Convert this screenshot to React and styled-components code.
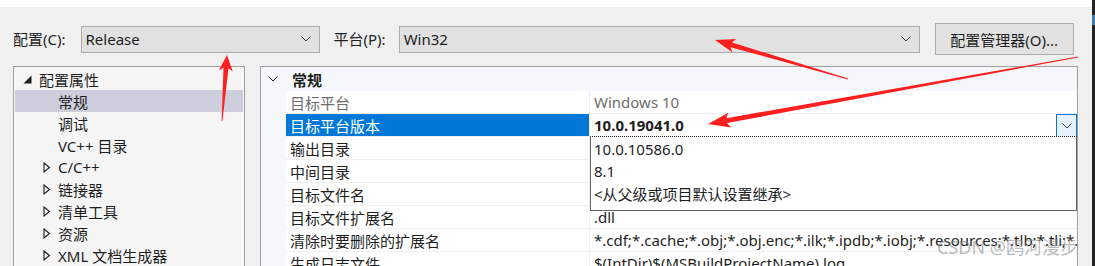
import React from 'react';
import styled, { createGlobalStyle } from 'styled-components';

const GlobalStyle = createGlobalStyle`
  html, body { margin: 0; padding: 0; background: #f0f0f0; }
  body {
    font-family: "Noto Sans", "Noto Sans CJK SC", sans-serif;
    font-size: 15px;
    color: #1e1e1e;
  }
`;

const Page = styled.div`
  position: relative;
  width: 1095px;
  height: 266px;
  overflow: hidden;
  display: flex;
  background: #f0f0f0;
`;

const Main = styled.div`
  flex: 1;
  display: flex;
  flex-direction: column;
  border-top: 7px solid #ffffff;
  padding: 0 14px 0 13px;
`;

const DarkStrip = styled.div`
  width: 3px;
  background: linear-gradient(#252526 0 15px, #3d7db4 15px 25px, #252526 25px);
`;

const TopBar = styled.div`
  height: 32px;
  display: flex;
  align-items: center;
  margin-top: 16px;
`;

const Label = styled.span`
  white-space: nowrap;
  margin-right: ${p => p.$gap}px;
  line-height: 20px;
`;

const Combo = styled.div`
  box-sizing: border-box;
  width: ${p => p.$width}px;
  height: 27px;
  border: 1px solid #adadad;
  background: #e1e1e1;
  display: flex;
  align-items: center;
  justify-content: space-between;
  padding: 0 8px 0 4px;
  margin-right: ${p => p.$gap}px;
`;

const Button = styled.div`
  box-sizing: border-box;
  width: 139px;
  height: 32px;
  border: 1px solid #adadad;
  background: #e1e1e1;
  display: flex;
  align-items: center;
  justify-content: center;
  white-space: nowrap;
`;

const Body = styled.div`
  flex: 1;
  display: flex;
  gap: 15px;
  margin-top: 11px;
`;

const TreePanel = styled.div`
  box-sizing: border-box;
  width: 232px;
  border: 1px solid #a0a0a0;
  border-bottom: none;
  background: #f5f5f5;
  padding: 1px 1px 0;
`;

const TreeRow = styled.div`
  height: 22px;
  display: flex;
  align-items: center;
  padding-left: ${p => p.$indent}px;
  background: ${p => (p.$selected ? '#cccedb' : 'transparent')};
  white-space: nowrap;
`;

const Twisty = styled.span`
  width: ${p => p.$w}px;
  display: flex;
  align-items: center;
`;

const Grid = styled.div`
  position: relative;
  flex: 1;
  box-sizing: border-box;
  border: 1px solid #a0a0a0;
  border-bottom: none;
  background: #f5f7fb;
  overflow: hidden;
`;

const CategoryRow = styled.div`
  height: 24px;
  display: flex;
  align-items: center;
  font-weight: bold;
`;

const Chevron = styled.span`
  width: 31px;
  box-sizing: border-box;
  display: flex;
  padding-left: 7px;
`;

const PropRow = styled.div`
  margin-left: 25px;
  height: 23px;
  display: grid;
  grid-template-columns: 304px 1fr;
  background: #ffffff;
  border-bottom: 1px solid #eef0f4;
  box-sizing: border-box;
`;

const NameCell = styled.div`
  display: flex;
  align-items: center;
  padding-left: 4px;
  white-space: nowrap;
  background: ${p => (p.$selected ? '#0078d7' : 'transparent')};
  color: ${p => (p.$selected ? '#ffffff' : p.$disabled ? '#6d6d6d' : '#1e1e1e')};
  border-right: 1px solid #eef0f4;
`;

const ValueCell = styled.div`
  position: relative;
  display: flex;
  align-items: center;
  padding-left: 4px;
  white-space: nowrap;
  overflow: hidden;
  font-weight: ${p => (p.$bold ? 'bold' : 'normal')};
  color: ${p => (p.$disabled ? '#6d6d6d' : '#1e1e1e')};
`;

const DropButton = styled.div`
  position: absolute;
  right: 0;
  top: 0;
  box-sizing: border-box;
  width: 21px;
  height: 23px;
  border: 1px solid #0078d7;
  background: #e5f1fb;
  display: flex;
  align-items: center;
  justify-content: center;
`;

const DropList = styled.div`
  position: absolute;
  left: 329px;
  top: 69px;
  right: 0;
  height: 75px;
  box-sizing: border-box;
  background: #ffffff;
  border: 1px solid #646464;
  border-top: 1px dotted #1e1e1e;
  padding-top: 1px;
`;

const DropItem = styled.div`
  height: 22px;
  display: flex;
  align-items: center;
  padding-left: 3px;
  white-space: nowrap;
`;

const Watermark = styled.div`
  position: absolute;
  right: 17px;
  bottom: 7px;
  font-size: 18px;
  color: rgba(140, 140, 140, 0.6);
  white-space: nowrap;
  pointer-events: none;
`;

const Overlay = styled.svg`
  position: absolute;
  left: 0;
  top: 0;
  pointer-events: none;
`;

const Down = ({ color = '#3c3c3c' }) => (
  <svg width="10" height="6" viewBox="0 0 10 6">
    <path d="M0.5 0.5 L5 5 L9.5 0.5" fill="none" stroke={color} strokeWidth="1" />
  </svg>
);

const Expanded = () => (
  <svg width="9" height="9" viewBox="0 0 9 9">
    <path d="M8.5 0.5 L8.5 8.5 L0.5 8.5 Z" fill="#1e1e1e" />
  </svg>
);

const Collapsed = () => (
  <svg width="8" height="11" viewBox="0 0 8 11">
    <path d="M1 1 L6.5 5.5 L1 10 Z" fill="none" stroke="#1e1e1e" strokeWidth="1.1" />
  </svg>
);

// tapered red arrow from tail to tip
function arrowPoints([tx, ty], [px, py], head = 20, headW = 14, shaft = 5) {
  const len = Math.hypot(px - tx, py - ty);
  const dx = (px - tx) / len;
  const dy = (py - ty) / len;
  const nx = -dy;
  const ny = dx;
  const bx = px - dx * head;
  const by = py - dy * head;
  const pts = [
    [tx + nx * 0.4, ty + ny * 0.4],
    [bx + dx * 3 + nx * shaft / 2, by + dy * 3 + ny * shaft / 2],
    [bx + nx * headW / 2, by + ny * headW / 2],
    [px, py],
    [bx - nx * headW / 2, by - ny * headW / 2],
    [bx + dx * 3 - nx * shaft / 2, by + dy * 3 - ny * shaft / 2],
    [tx - nx * 0.4, ty - ny * 0.4],
  ];
  return pts.map(p => p.map(v => v.toFixed(1)).join(',')).join(' ');
}

const arrows = [
  { tail: [222, 121], tip: [227, 55], head: 16, w: 14, s: 5 },
  { tail: [848, 79], tip: [715, 40], head: 20, w: 14, s: 5 },
  { tail: [1078, 57], tip: [708, 124], head: 22, w: 15, s: 5 },
];

const tree = [
  { text: '配置属性', indent: 8, twisty: 'open' },
  { text: '常规', indent: 43, selected: true },
  { text: '调试', indent: 43 },
  { text: 'VC++ 目录', indent: 43 },
  { text: 'C/C++', indent: 28, twisty: 'closed' },
  { text: '链接器', indent: 28, twisty: 'closed' },
  { text: '清单工具', indent: 28, twisty: 'closed' },
  { text: '资源', indent: 28, twisty: 'closed' },
  { text: 'XML 文档生成器', indent: 28, twisty: 'closed' },
];

const props = [
  { name: '目标平台', value: 'Windows 10', disabled: true },
  { name: '目标平台版本', value: '10.0.19041.0', selected: true },
  { name: '输出目录', value: '' },
  { name: '中间目录', value: '' },
  { name: '目标文件名', value: '' },
  { name: '目标文件扩展名', value: '.dll' },
  { name: '清除时要删除的扩展名', value: '*.cdf;*.cache;*.obj;*.obj.enc;*.ilk;*.ipdb;*.iobj;*.resources;*.tlb;*.tli;*.tlh;*.tmp' },
  { name: '生成日志文件', value: '$(IntDir)$(MSBuildProjectName).log' },
];

const options = ['10.0.10586.0', '8.1', '<从父级或项目默认设置继承>'];

export default function App() {
  return (
    <Page>
      <GlobalStyle />
      <Main>
        <TopBar>
          <Label $gap={15}>配置(C):</Label>
          <Combo $width={239} $gap={14}>
            <span>Release</span>
            <Down />
          </Combo>
          <Label $gap={13}>平台(P):</Label>
          <Combo $width={521} $gap={15}>
            <span>Win32</span>
            <Down />
          </Combo>
          <Button>配置管理器(O)...</Button>
        </TopBar>
        <Body>
          <TreePanel>
            {tree.map(item => (
              <TreeRow key={item.text} $indent={item.indent} $selected={item.selected}>
                {item.twisty === 'open' && <Twisty $w={16}><Expanded /></Twisty>}
                {item.twisty === 'closed' && <Twisty $w={15}><Collapsed /></Twisty>}
                {item.text}
              </TreeRow>
            ))}
          </TreePanel>
          <Grid>
            <CategoryRow>
              <Chevron><Down color="#1e1e1e" /></Chevron>
              常规
            </CategoryRow>
            {props.map(p => (
              <PropRow key={p.name}>
                <NameCell $selected={p.selected} $disabled={p.disabled}>{p.name}</NameCell>
                <ValueCell $bold={p.selected} $disabled={p.disabled}>
                  {p.value}
                  {p.selected && <DropButton><Down /></DropButton>}
                </ValueCell>
              </PropRow>
            ))}
            <DropList>
              {options.map(o => <DropItem key={o}>{o}</DropItem>)}
            </DropList>
          </Grid>
        </Body>
      </Main>
      <DarkStrip />
      <Watermark>CSDN @鸥河漫步</Watermark>
      <Overlay width="1095" height="266">
        {arrows.map((a, i) => (
          <polygon key={i} points={arrowPoints(a.tail, a.tip, a.head, a.w, a.s)} fill="#ff1f1f" />
        ))}
      </Overlay>
    </Page>
  );
}
